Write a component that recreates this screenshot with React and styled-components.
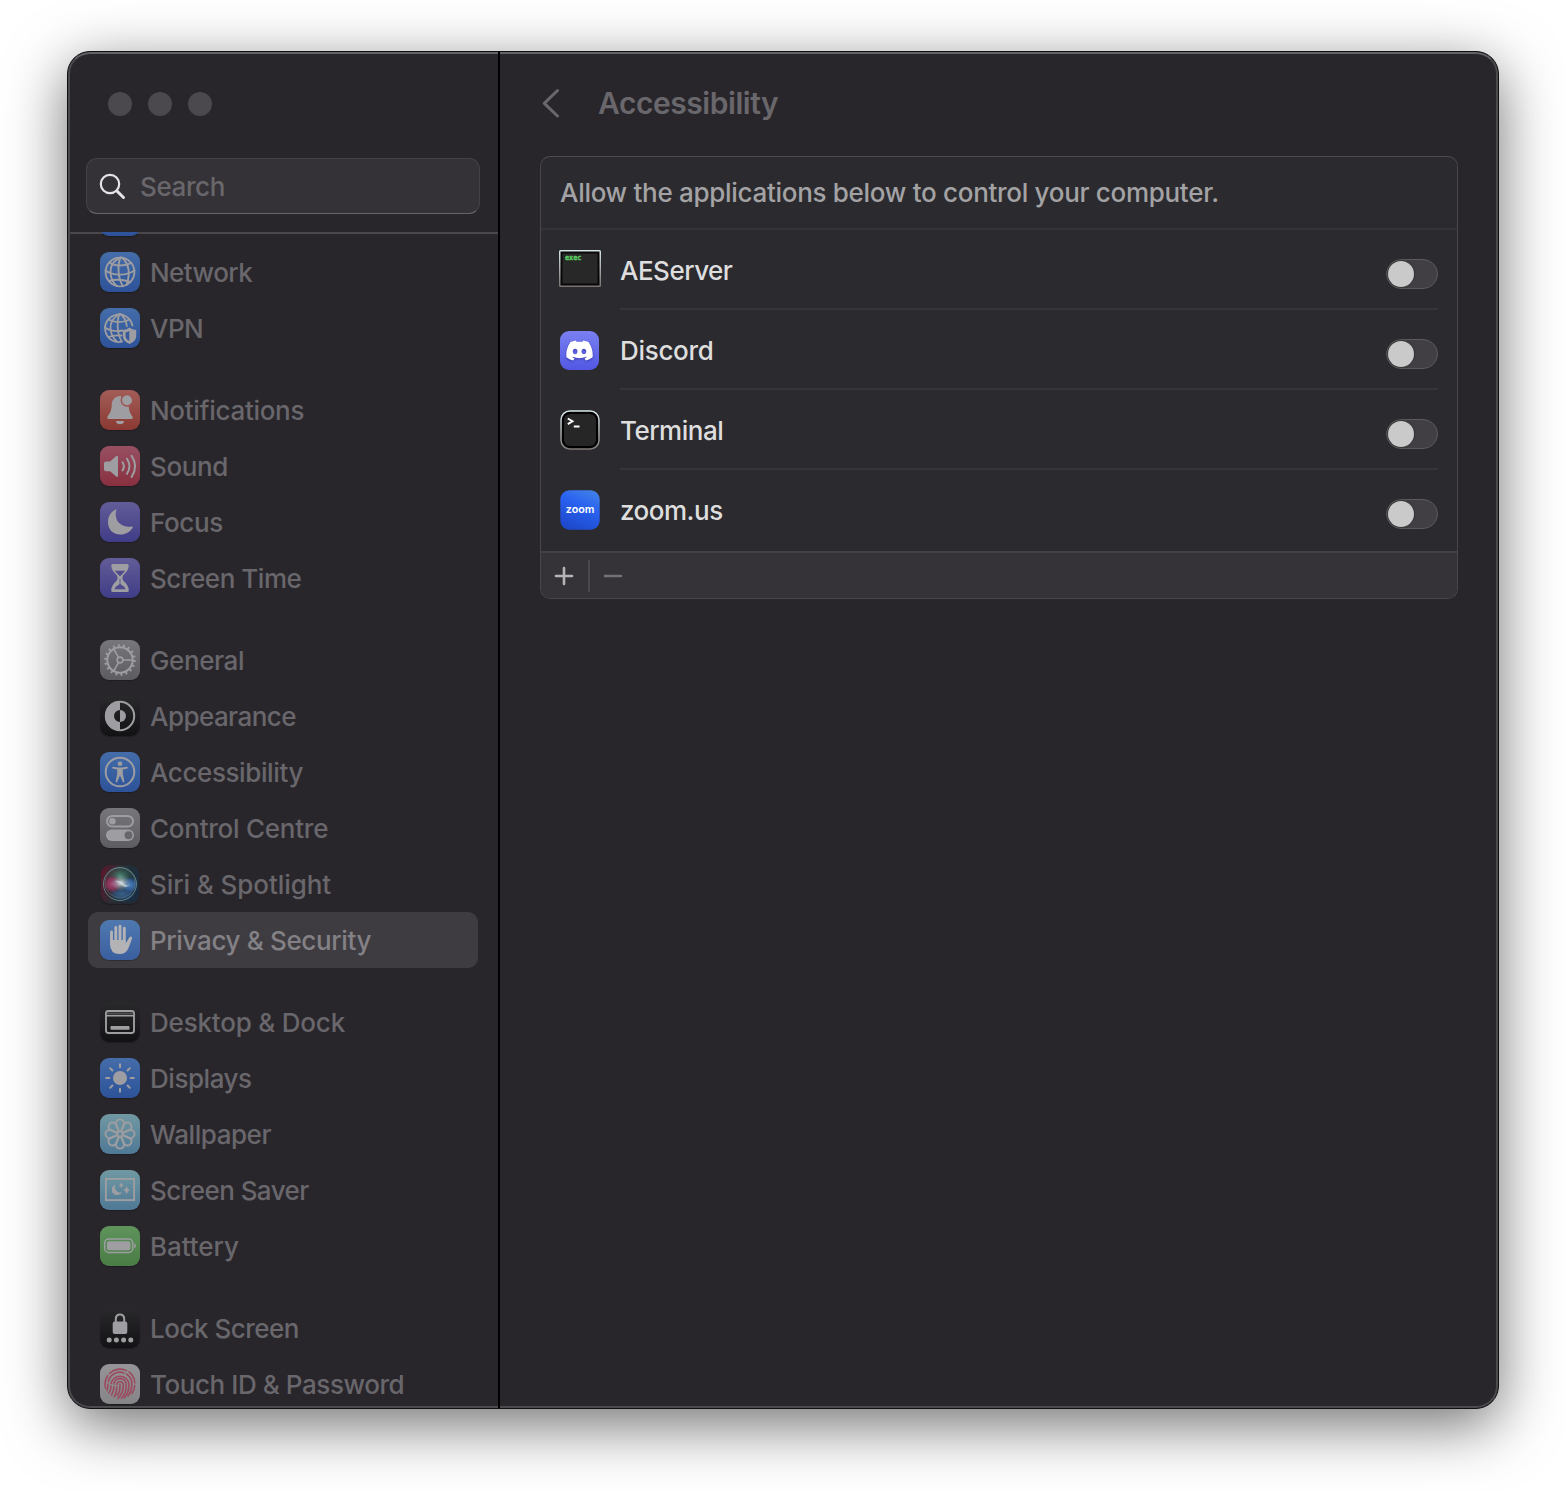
import React from 'react';
import styled, { createGlobalStyle, css } from 'styled-components';
import { FaDiscord } from 'react-icons/fa';

const GlobalStyle = createGlobalStyle`
  *, *::before, *::after { box-sizing: border-box; }
  html, body { margin: 0; background: #fff; }
  body { font-family: Inter, "Liberation Sans", sans-serif; font-weight: 450; }
`;

const Desktop = styled.main`
  width: 1566px;
  height: 1492px;
  padding: 51px 67px 83px;
  overflow: hidden;
  background: #fff;
`;

const Window = styled.div`
  position: relative;
  isolation: isolate;
  display: flex;
  height: 1358px;
  border: 1px solid #0f0e10;
  border-radius: 23px;
  overflow: hidden;
  background: #28262b;
`;

const Shadow = styled.div`
  border-radius: 23px;
  box-shadow: 0 16px 60px rgba(0, 0, 0, 0.56);
`;

const Rim = styled.div`
  position: absolute;
  inset: 0;
  z-index: -1;
  border: 2px solid #4b4a4d;
  border-top-color: #636265;
  border-radius: 22px;
  pointer-events: none;
`;

const Sidebar = styled.aside`
  display: flex;
  flex-direction: column;
  flex: 0 0 432px;
  border-right: 2px solid #000;
`;

const TrafficLights = styled.div`
  display: flex;
  gap: 16px;
  padding: 40px 0 0 40px;
`;

const Light = styled.span`
  width: 24px;
  height: 24px;
  border-radius: 50%;
  background: #4b494e;
`;

const SearchField = styled.div`
  display: flex;
  align-items: center;
  gap: 13px;
  height: 56px;
  margin: 42px 18px 18px;
  padding-left: 12px;
  border: 1px solid #444246;
  border-bottom-color: #67656a;
  border-radius: 11px;
  background: #343236;
  color: #69676b;
  font-size: 26px;
`;

const List = styled.nav`
  flex: 1;
  min-height: 0;
  overflow: hidden;
  box-shadow: inset 0 2px #4a484d;
`;

const Groups = styled.div`
  display: flex;
  flex-direction: column;
  gap: 26px;
  margin: -44px 20px 0;
`;

const Group = styled.div`
  display: flex;
  flex-direction: column;
`;

const Item = styled.div`
  display: flex;
  flex: 0 0 56px;
  align-items: center;
  gap: 10px;
  padding-left: 12px;
  border-radius: 10px;
  color: #69676b;
  ${(p) => p.$selected && css`
    background: #3e3c41;
    color: #838185;
  `}
`;

const Label = styled.span`
  padding-top: 1px;
  font-size: 26px;
  line-height: 32px;
  letter-spacing: ${(p) => p.$spacing || 0}px;
  white-space: nowrap;
`;

const Tile = styled.span`
  display: flex;
  flex: 0 0 40px;
  height: 40px;
  border-radius: 9px;
  overflow: hidden;
  background: linear-gradient(${(p) => p.$tone});
  box-shadow: 0 1px 1px rgba(0, 0, 0, 0.25);
`;

const Glyph = styled.svg`
  width: 40px;
  height: 40px;
  fill: none;
  stroke: ${(p) => p.$ink || '#9e9da1'};
  stroke-width: 2;
  stroke-linecap: round;
  stroke-linejoin: round;
  .solid { fill: ${(p) => p.$ink || '#9e9da1'}; stroke: none; }
`;

const Content = styled.section`
  flex: 1;
  padding: 27px 40px 0 40px;
`;

const Header = styled.header`
  display: flex;
  align-items: center;
  gap: 38px;
  height: 48px;
`;

const BackIcon = styled.svg`
  width: 20px;
  height: 30px;
  fill: none;
  stroke: #69676b;
  stroke-width: 3;
  stroke-linecap: round;
  stroke-linejoin: round;
`;

const Title = styled.h1`
  margin: 0;
  color: #69676b;
  font-size: 30px;
  font-weight: 600;
  line-height: 40px;
  letter-spacing: -0.45px;
`;

const Card = styled.div`
  height: 443px;
  margin-top: 29px;
  border: 1px solid #48464b;
  border-top-color: #4e4c51;
  border-radius: 10px;
  overflow: hidden;
  background: #2b2a2e;
`;

const Intro = styled.p`
  height: 73px;
  margin: 0;
  padding-left: 19px;
  border-bottom: 2px solid #353338;
  color: #a3a2a4;
  font-size: 26px;
  line-height: 71px;
  letter-spacing: -0.3px;
  white-space: nowrap;
`;

const AppRow = styled.div`
  display: flex;
  height: 80px;
  padding: 0 19px 0 18px;
`;

const AppIcon = styled.svg`
  flex: 0 0 42px;
  width: 42px;
  height: 42px;
  margin: 19px 19px 0 0;
`;

const DiscordTile = styled.span`
  display: flex;
  align-items: center;
  justify-content: center;
  flex: 0 0 39px;
  height: 39px;
  margin: 20.5px 21px 0 1px;
  border-radius: 9px;
  background: linear-gradient(#7a80f0, #5258e4);
  color: #fff;
  svg {
    width: 29px;
    height: 23px;
    filter: drop-shadow(0 1px 1px rgba(30, 30, 140, 0.6));
  }
`;

const AppBody = styled.div`
  display: flex;
  flex: 1;
  justify-content: space-between;
  height: 80px;
  border-bottom: 2px solid ${(p) => (p.$last ? 'transparent' : '#37353a')};
  color: #dededf;
`;

const AppName = styled(Label)`
  padding-top: 25px;
`;

const Toggle = styled.span`
  display: flex;
  align-items: center;
  width: 52px;
  height: 30px;
  margin-top: 29px;
  padding-left: 1px;
  border: 1px solid #5b595d;
  border-radius: 15px;
  background: #413f43;
`;

const Knob = styled.span`
  width: 26px;
  height: 26px;
  border-radius: 50%;
  background: #cbcacb;
  box-shadow: 0 0 2px rgba(0, 0, 0, 0.5);
`;

const Footer = styled.div`
  display: flex;
  align-items: center;
  height: 47px;
  margin-top: 1px;
  border-top: 2px solid #444247;
  background: #353337;
`;

const FooterButton = styled.span`
  display: flex;
  justify-content: center;
  width: 47px;
  padding-right: 1px;
`;

const FooterDivider = styled.span`
  width: 2px;
  height: 32px;
  background: #4a484c;
`;

const FooterIcon = styled.svg`
  width: 20px;
  height: 20px;
  stroke: ${(p) => p.$ink};
  stroke-width: 2.6;
  stroke-linecap: round;
`;

const BLUE = '#446da9, #2d5299';
const INDIGO = '#625d98, #403c87';
const GREY = '#77767a, #5d5c60';
const BLACK = '#29282b, #121214';
const SKY = '#7099a3, #4f7896';

const Globe = () => (
  <g strokeWidth="1.9">
    <circle cx="20" cy="20" r="14.400" />
    <path d="M20.500 5.500C13 9 10 15 10.500 21C11 27 13 31 17 34" />
    <path d="M20.500 5.500C17.500 12 17.500 26 23 34.200" />
    <path d="M22 5.500C28 11 31 20 26.500 33" />
    <path d="M9 10.500C15 14.500 24 14.500 31.500 11" />
    <path d="M5.500 18.500C14 24.500 27 23.500 34.500 18.500" />
    <path d="M9 29C15 27 24 27.500 30 30" />
  </g>
);

const petals = [0, 45, 90, 135, 180, 225, 270, 315];

const glyphs = {
  network: <Globe />,
  vpn: (
    <>
      <g strokeWidth="1.8">
        <path d="M22 33.700A13.800 13.800 0 1 1 32.400 17.500" />
        <path d="M19.500 6C12.500 10 10 15 10.500 21C11 26 13 30 16.500 33" />
        <path d="M19.500 6C17 12 16.500 25 21.500 33" />
        <path d="M20.500 6C24.500 9.500 26.500 13.500 26.800 18" />
        <path d="M8.500 11.500C14 15 23 15 29.500 11.500" />
        <path d="M5 19.500C11 23.500 17 23.600 22.500 22.500" />
        <path d="M8.500 29C12 27.500 17 27.200 21.500 27.500" />
      </g>
      <path className="solid" d="M29.500 19.600Q32 22 36.200 22V28.500Q35.700 33.500 29.500 36Q23.300 33.500 22.800 28.500V22Q27 22 29.500 19.600Z" />
      <path d="M29.300 22.900Q27.500 24.200 25.600 24.400V29Q26.300 31.800 29.300 33.300Z" fill="#36599c" stroke="none" />
    </>
  ),
  bell: (
    <>
      <path className="solid" d="M20.500 6C15 6 12 9.500 11.700 15C11.500 21 10 23 7.600 26.500Q6.500 28.800 9 29H31Q33.700 28.800 32.400 26.500C30.300 23.500 29 21.500 28.600 15Z" />
      <path className="solid" d="M15.800 31H24.200Q23.500 34.300 20 34.300Q16.500 34.300 15.800 31Z" />
      <circle cx="27" cy="10.300" r="6.400" fill="#9d5450" stroke="none" />
      <circle className="solid" cx="27" cy="10.300" r="5" />
    </>
  ),
  sound: (
    <>
      <path className="solid" d="M4 17.500Q4 15.600 6 15.600H10L16.300 10Q18 9 18 11V29.600Q18 31.800 16.300 30.600L10 25.300H6Q4 25.300 4 23.300Z" />
      <path d="M22.500 16.200Q25.300 20.300 22.500 24.500M27 12.800Q32 20.300 27 27.800M31.600 9.800Q38.600 20.300 31.600 31" />
    </>
  ),
  moon: <path className="solid" d="M16.500 7.600C13.500 16.500 19 26.500 32 24.500Q33.300 24.400 32.500 26C26.500 36 8 35 8 20C8 13.500 11.500 9.500 15.500 7.400Q16.800 6.800 16.500 7.600Z" />,
  hourglass: (
    <>
      <path className="solid" d="M12.500 6H27.500Q29 6 28.700 8.500Q28.300 12.500 23 17.600Q21.800 20 23 22.300Q28.500 27.500 28.800 31.500Q29 34 27.500 34H12.500Q11 34 11.200 31.500Q11.500 27.500 17 22.300Q18.200 20 17 17.600Q11.700 12.500 11.300 8.500Q11 6 12.500 6Z" />
      <path d="M14.800 12.700H25.200Q23 15.500 20 18.300Q17 15.500 14.800 12.700ZM19.600 21H20.400V26Q24.500 28.500 25.700 31.300H14.300Q15.500 28.500 19.600 26Z" fill="#504c8e" stroke="none" />
    </>
  ),
  gear: (
    <>
      <circle cx="20" cy="20" r="14.500" strokeWidth="2.600" strokeDasharray="1.900 3.161" strokeLinecap="butt" />
      <circle cx="20" cy="20" r="12.700" strokeWidth="2" />
      <circle cx="20" cy="20" r="2.900" strokeWidth="1.600" />
      <path d="M23.200 20H32M18.400 17.200L14 9.500M18.400 22.800L14 30.500" strokeWidth="1.600" />
    </>
  ),
  appearance: (
    <>
      <circle cx="20" cy="20" r="14.200" />
      <path className="solid" d="M20 5A15 15 0 0 0 20 35V26A6 6 0 0 1 20 14Z" />
      <path className="solid" d="M20 14A6 6 0 0 1 20 26Z" />
    </>
  ),
  person: (
    <>
      <circle cx="20" cy="20" r="14.300" />
      <circle className="solid" cx="20" cy="11.800" r="2.300" />
      <path className="solid" d="M12.800 14.700L18 15.600H22L27.200 14.700Q28.600 15.300 27.400 16.400L22.800 17.600V22L24.400 29.400Q24 31 22.700 29.800L20 23.600L17.300 29.800Q16 31 15.600 29.400L17.200 22V17.600L12.600 16.400Q11.400 15.300 12.800 14.700Z" />
    </>
  ),
  controls: (
    <>
      <rect x="7" y="8" width="26" height="10.500" rx="5.250" strokeWidth="1.900" />
      <circle className="solid" cx="12.400" cy="13.250" r="3.300" />
      <rect className="solid" x="6" y="21.500" width="28" height="11.500" rx="5.750" />
      <circle cx="28.500" cy="27.250" r="3.900" fill="#68676b" stroke="none" />
    </>
  ),
  siri: (
    <>
      <defs>
        <linearGradient id="siriBase" x1="0" y1="0.300" x2="1" y2="0.600">
          <stop offset="0" stopColor="#561a2d" />
          <stop offset="0.500" stopColor="#243034" />
          <stop offset="1" stopColor="#1b2c42" />
        </linearGradient>
        <radialGradient id="siriTop"><stop offset="0" stopColor="#4f8a75" /><stop offset="1" stopColor="#2f5a50" stopOpacity="0" /></radialGradient>
        <radialGradient id="siriPink"><stop offset="0" stopColor="#a5487a" /><stop offset="0.600" stopColor="#93365c" stopOpacity="0.800" /><stop offset="1" stopColor="#7d2c50" stopOpacity="0" /></radialGradient>
        <radialGradient id="siriBlue"><stop offset="0" stopColor="#4a82bd" /><stop offset="0.600" stopColor="#3668a8" stopOpacity="0.800" /><stop offset="1" stopColor="#2b5795" stopOpacity="0" /></radialGradient>
        <radialGradient id="siriCore"><stop offset="0" stopColor="#dce2e6" /><stop offset="1" stopColor="#8aa2ae" stopOpacity="0" /></radialGradient>
      </defs>
      <rect x="1" y="1" width="38" height="38" rx="9" fill="url(#siriBase)" stroke="none" />
      <g stroke="none">
        <ellipse cx="20" cy="12" rx="15" ry="11" fill="url(#siriTop)" />
        <ellipse cx="22" cy="30" rx="13" ry="7" fill="url(#siriBlue)" fillOpacity="0.600" />
        <circle cx="12.500" cy="20" r="9" fill="url(#siriPink)" />
        <circle cx="30" cy="21" r="8" fill="url(#siriBlue)" />
        <ellipse cx="21" cy="19" rx="10" ry="8" fill="url(#siriCore)" />
        <path d="M15 17Q20 16 24 19.500T31 20Q26 25 22 21.500T15 17Z" fill="#ccd5da" fillOpacity="0.700" />
      </g>
      <circle cx="20" cy="20" r="16.500" stroke="#5f8284" strokeWidth="1" />
      <circle cx="20" cy="18.800" r="15" stroke="#6f8a90" strokeOpacity="0.600" strokeWidth="0.700" />
    </>
  ),
  hand: (
    <>
      <path d="M11.500 12V24M15.800 7.500V22M20 6.300V22M24.300 8.300V22" strokeWidth="2.900" />
      <path className="solid" d="M10 20H25.700V23.500L29.300 17.600Q30.800 15.800 32 17.200Q32.300 18 31.700 19.500L28.500 28Q26 34 19.800 34Q10 34 10 24Z" />
    </>
  ),
  dock: (
    <>
      <rect x="6" y="9" width="28" height="22" rx="2.500" strokeWidth="1.900" />
      <path d="M6 13.800H34" strokeWidth="1.600" />
      <path d="M7.500 11.500H32.500" strokeWidth="1.800" stroke="#4d4c4f" />
      <rect className="solid" x="10.500" y="24" width="19" height="3.800" rx="0.800" />
    </>
  ),
  sun: (
    <>
      <circle className="solid" cx="20" cy="20" r="7" />
      {petals.map((a) => <path key={a} d="M20 9.300V6.200" transform={`rotate(${a} 20 20)`} />)}
    </>
  ),
  flower: (
    <>
      {petals.map((a) => <path key={a} d="M20 20L16.200 11.200A4.150 4.150 0 1 1 23.800 11.200Z" transform={`rotate(${a} 20 20)`} strokeWidth="1.900" />)}
      <circle cx="20" cy="20" r="2.600" fill="#628795" strokeWidth="1.700" />
    </>
  ),
  saver: (
    <>
      <rect x="5.900" y="8.900" width="28.200" height="21.200" strokeWidth="1.900" strokeLinejoin="miter" />
      <path className="solid" d="M15.200 14.500C14 20 17.500 23.500 22 22.300C20 26.500 11.800 26 11.800 19.700C11.800 17 13.300 15.300 15.200 14.500Z" />
      <path className="solid" d="M21.300 12.300Q21.800 14.700 23.900 15.300Q21.800 15.900 21.300 18.300Q20.800 15.900 18.700 15.300Q20.800 14.700 21.300 12.300ZM26.700 16Q27.400 19.400 30 20.100Q27.400 20.800 26.700 24.200Q26 20.800 23.400 20.100Q26 19.400 26.700 16Z" />
    </>
  ),
  battery: (
    <>
      <rect x="4.700" y="13" width="28" height="13.500" rx="4" strokeWidth="1.500" />
      <rect className="solid" x="7" y="15.200" width="23.400" height="9.100" rx="2" />
      <path className="solid" d="M34.200 17.200Q36 18 36 19.800T34.200 22.400Z" />
    </>
  ),
  lock: (
    <>
      <rect className="solid" x="12.700" y="13.500" width="14.600" height="12.500" rx="2" />
      <path d="M15.800 14.500V11Q15.800 6.500 20 6.500T24.200 11V14.500" />
      {[9.200, 16.400, 23.600, 30.800].map((x) => <circle key={x} className="solid" cx={x} cy="32" r="2.500" />)}
    </>
  ),
  fingerprint: (
    <g strokeWidth="1.600">
      <path d="M9.500 9.500A15 15 0 0 1 26.500 6.600M29 7.900A15 15 0 0 1 34.800 19M34.800 21.500Q34.300 26 32 29.500M7.600 11.700Q5 15.500 5 20.500Q5 22 5.600 24" />
      <path d="M8.300 17.500A12 12 0 0 1 24 8.900M26.500 10A12 12 0 0 1 31.900 20Q31.800 27 28 32M8 20Q8 24 7 26.500" />
      <path d="M11 19.500A9.200 9.200 0 0 1 29 19.500Q29.200 28 24.500 33.800M11 22Q11 26 9 29" />
      <path d="M13.900 20A6.200 6.200 0 0 1 26.200 20Q26.500 29 21.500 34.500M13.900 22.500Q13.800 27.500 11.500 31" />
      <path d="M16.800 20.500A3.300 3.300 0 0 1 23.300 20.500Q23.500 29 18 34.400M16.800 23Q16.800 29 14.300 32.800" />
      <path d="M20 20.500Q20.300 28 17.200 31.500" />
    </g>
  ),
};

const groups = [
  [
    { label: '', tone: BLUE, icon: null },
    { label: 'Network', tone: BLUE, icon: 'network', spacing: -0.55 },
    { label: 'VPN', tone: BLUE, icon: 'vpn', spacing: -0.5 },
  ],
  [
    { label: 'Notifications', tone: '#a35d58, #8a3932', icon: 'bell', spacing: -0.3 },
    { label: 'Sound', tone: '#975062, #89303f', icon: 'sound', spacing: -0.4 },
    { label: 'Focus', tone: INDIGO, icon: 'moon', spacing: -0.4 },
    { label: 'Screen Time', tone: INDIGO, icon: 'hourglass', spacing: -0.45 },
  ],
  [
    { label: 'General', tone: GREY, icon: 'gear', spacing: -0.4 },
    { label: 'Appearance', tone: BLACK, icon: 'appearance', spacing: -0.55 },
    { label: 'Accessibility', tone: BLUE, icon: 'person', spacing: -0.4 },
    { label: 'Control Centre', tone: GREY, icon: 'controls', spacing: -0.25 },
    { label: 'Siri & Spotlight', tone: 'transparent, transparent', icon: 'siri', spacing: -0.08 },
    { label: 'Privacy & Security', tone: '#5079b0, #3a5f9f', icon: 'hand', spacing: -0.35, ink: '#b3b2b5', selected: true },
  ],
  [
    { label: 'Desktop & Dock', tone: BLACK, icon: 'dock', spacing: -0.2 },
    { label: 'Displays', tone: BLUE, icon: 'sun', spacing: -0.45 },
    { label: 'Wallpaper', tone: SKY, icon: 'flower', spacing: -0.45 },
    { label: 'Screen Saver', tone: SKY, icon: 'saver', spacing: -0.55 },
    { label: 'Battery', tone: '#5f945d, #4a7c45', icon: 'battery', spacing: -0.05 },
  ],
  [
    { label: 'Lock Screen', tone: BLACK, icon: 'lock', spacing: -0.5 },
    { label: 'Touch ID & Password', tone: '#959497, #858487', icon: 'fingerprint', spacing: -0.43, ink: '#9c4a5f' },
  ],
];

const ExecIcon = () => (
  <AppIcon viewBox="0 0 42 42">
    <defs>
      <linearGradient id="execRim" x1="0" y1="0" x2="0" y2="1"><stop offset="0" stopColor="#d8e6e9" /><stop offset="1" stopColor="#77716d" /></linearGradient>
    </defs>
    <rect x="0" y="1" width="42" height="37" rx="1.500" fill="url(#execRim)" />
    <rect x="1.500" y="2.500" width="39" height="34" fill="#080808" />
    <rect x="3.500" y="4.500" width="35" height="30" fill="#282828" />
    <text x="6" y="11" fontFamily="DejaVu Sans Mono, monospace" fontSize="7.500" fontWeight="700" textLength="16.500" lengthAdjust="spacingAndGlyphs" fill="#5fd463" stroke="#5fd463" strokeWidth="0.300">exec</text>
  </AppIcon>
);

const DiscordIcon = () => <DiscordTile><FaDiscord /></DiscordTile>;

const TerminalIcon = () => (
  <AppIcon viewBox="0 0 42 42">
    <defs>
      <linearGradient id="termRim" x1="0" y1="0" x2="0" y2="1"><stop offset="0" stopColor="#dbecef" /><stop offset="1" stopColor="#807a77" /></linearGradient>
    </defs>
    <rect x="1.300" y="1.300" width="39.400" height="39.400" rx="9.500" fill="url(#termRim)" />
    <rect x="2.800" y="2.800" width="36.400" height="36.400" rx="8" fill="#000" />
    <rect x="5" y="5" width="32" height="32" rx="6" fill="#262626" />
    <path d="M8.800 9.500L13.500 12.300L8.800 15.100M14.800 17.500H20.500" fill="none" stroke="#fff" strokeWidth="1.900" />
  </AppIcon>
);

const ZoomIcon = () => (
  <AppIcon viewBox="0 0 42 42">
    <defs>
      <linearGradient id="zoomBase" x1="0.800" y1="0" x2="0.350" y2="1"><stop offset="0" stopColor="#4180e8" /><stop offset="0.400" stopColor="#2a62f0" /><stop offset="1" stopColor="#1d49cc" /></linearGradient>
    </defs>
    <rect x="1.300" y="1.300" width="39.400" height="39.400" rx="9" fill="url(#zoomBase)" />
    <text x="6.800" y="24" fontFamily="Inter, sans-serif" fontSize="11" fontWeight="600" textLength="28.500" lengthAdjust="spacingAndGlyphs" fill="#fff">zoom</text>
  </AppIcon>
);

const apps = [
  { name: 'AEServer', Icon: ExecIcon, spacing: -0.5 },
  { name: 'Discord', Icon: DiscordIcon, spacing: -0.3 },
  { name: 'Terminal', Icon: TerminalIcon, spacing: -0.5 },
  { name: 'zoom.us', Icon: ZoomIcon, spacing: -0.5 },
];

export default function App() {
  return (
    <Desktop>
      <GlobalStyle />
      <Shadow>
        <Window>
          <Sidebar>
            <TrafficLights><Light /><Light /><Light /></TrafficLights>
            <SearchField>
              <svg width="28" height="28" viewBox="0 0 28 28" fill="none" stroke="#e4e3e5" strokeLinecap="round">
                <circle cx="11" cy="12" r="9.200" strokeWidth="2.200" />
                <path d="M17.800 18.900L24.500 25.500" strokeWidth="2.900" />
              </svg>
              <Label $spacing={-0.4}>Search</Label>
            </SearchField>
            <List>
              <Groups>
                {groups.map((items, i) => (
                  <Group key={i}>
                    {items.map((item) => (
                      <Item key={item.label} $selected={item.selected}>
                        <Tile $tone={item.tone}>
                          {item.icon && <Glyph viewBox="0 0 40 40" $ink={item.ink}>{glyphs[item.icon]}</Glyph>}
                        </Tile>
                        <Label $spacing={item.spacing}>{item.label}</Label>
                      </Item>
                    ))}
                  </Group>
                ))}
              </Groups>
            </List>
          </Sidebar>
          <Content>
            <Header>
              <BackIcon viewBox="0 0 20 30"><path d="M17.500 2.500L4.300 15.300L17.500 28" /></BackIcon>
              <Title>Accessibility</Title>
            </Header>
            <Card>
              <Intro>Allow the applications below to control your computer.</Intro>
              {apps.map(({ name, Icon, spacing }, i) => (
                <AppRow key={name}>
                  <Icon />
                  <AppBody $last={i === apps.length - 1}>
                    <AppName $spacing={spacing}>{name}</AppName>
                    <Toggle><Knob /></Toggle>
                  </AppBody>
                </AppRow>
              ))}
              <Footer>
                <FooterButton><FooterIcon viewBox="0 0 20 20" $ink="#b5b4b6"><path d="M10 2V18M2 10H18" /></FooterIcon></FooterButton>
                <FooterDivider />
                <FooterButton><FooterIcon viewBox="0 0 20 20" $ink="#737175"><path d="M2 10H18" /></FooterIcon></FooterButton>
              </Footer>
            </Card>
          </Content>
          <Rim />
        </Window>
      </Shadow>
    </Desktop>
  );
}
